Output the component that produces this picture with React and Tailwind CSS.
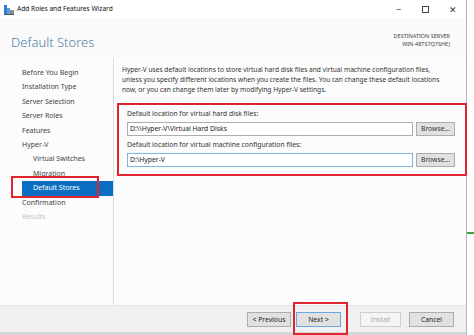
import React from 'react';

const navItems = [
  { label: 'Before You Begin' },
  { label: 'Installation Type' },
  { label: 'Server Selection' },
  { label: 'Server Roles' },
  { label: 'Features' },
  { label: 'Hyper-V' },
  { label: 'Virtual Switches', sub: true },
  { label: 'Migration', sub: true },
  { label: 'Default Stores', sub: true, active: true },
  { label: 'Confirmation' },
  { label: 'Results', disabled: true },
];

const intro = [
  'Hyper-V uses default locations to store virtual hard disk files and virtual machine configuration files,',
  'unless you specify different locations when you create the files. You can change these default locations',
  'now, or you can change them later by modifying Hyper-V settings.',
];

function WizardIcon() {
  return (
    <svg width="10" height="10" viewBox="0 0 10 10">
      <rect x="0" y="0" width="3" height="9" fill="#2f7fd0" />
      <rect x="3" y="3" width="3" height="6" fill="#5aa0e0" />
      <rect x="6" y="5" width="4" height="4" fill="#8a8a8a" />
      <rect x="0" y="9" width="10" height="1" fill="#555" />
    </svg>
  );
}

function PathRow({ label, value, focused }) {
  return (
    <div className="flex flex-col">
      <div className="text-[6.8px] text-[#333] h-[12px] leading-[12px]">{label}</div>
      <div className="flex items-center gap-[3px] mt-[2px]">
        <div className={`flex-1 h-[14px] bg-white border ${focused ? 'border-[#7eb4ea]' : 'border-[#adadad]'} text-[6.8px] text-[#222] leading-[12px] px-[2px]`}>
          {value}
        </div>
        <div className="w-[39px] h-[14px] bg-[#e1e1e1] border border-[#adadad] text-[6.8px] text-[#333] leading-[12px] text-center">
          Browse...
        </div>
      </div>
    </div>
  );
}

function FooterButton({ children, primary, disabled, w }) {
  return (
    <div
      className={`${w} h-[15px] border text-[6.8px] leading-[13px] text-center ${
        primary
          ? 'bg-[#e1e1e1] border-[#6aa8e4] text-[#222]'
          : disabled
          ? 'bg-[#f4f4f4] border-[#cfcfcf] text-[#a8a8a8]'
          : 'bg-[#e1e1e1] border-[#adadad] text-[#222]'
      }`}
    >
      {children}
    </div>
  );
}

export default function App() {
  return (
    <div
      className="w-[474px] h-[335px] bg-white flex overflow-hidden relative"
      style={{ fontFamily: '"Noto Sans", "Open Sans", sans-serif' }}
    >
      <div className="w-[467px] h-full flex flex-col border-r border-[#b5b5b5]">
        {/* title bar */}
        <div className="h-[18px] flex items-center bg-white">
          <div className="ml-[4px] mt-[1px]">
            <WizardIcon />
          </div>
          <div className="ml-[3px] text-[6.6px] text-[#111]">Add Roles and Features Wizard</div>
          <div className="ml-auto flex items-center text-[#333]">
            <div className="w-[27px] text-center text-[9px] leading-none">−</div>
            <div className="w-[27px] flex justify-center">
              <div className="w-[7px] h-[7px] border border-[#444]" />
            </div>
            <div className="w-[27px] text-center text-[9px] leading-none">✕</div>
          </div>
        </div>

        {/* header */}
        <div className="h-[40px] bg-[#fafafa] flex justify-between px-[11px]">
          <div className="text-[13px] font-light text-[#4f7fa6] mt-[18px] leading-none">Default Stores</div>
          <div className="text-right text-[5.5px] text-[#444] mt-[14px] mr-[5px] leading-[8px]">
            <div>DESTINATION SERVER</div>
            <div>WIN-48TS7Q7SHEJ</div>
          </div>
        </div>

        {/* body */}
        <div className="flex-1 flex bg-[#fcfcfc]">
          <div className="w-[114px] pt-[8px] pb-[10px] border-r border-[#dcdcdc] relative">
            <div className="flex flex-col">
              {navItems.map((it) => (
                <div
                  key={it.label}
                  className={`h-[14.4px] leading-[14.4px] text-[7px] ml-[22px] ${it.sub ? 'pl-[11px]' : 'pl-0'} ${
                    it.active
                      ? 'bg-[#0a6fc2] text-white'
                      : it.disabled
                      ? 'text-[#c4c4c4]'
                      : 'text-[#444]'
                  }`}
                >
                  {it.label}
                </div>
              ))}
            </div>
            <div className="absolute left-[11px] top-[118px] w-[88px] h-[22px] border-2 border-[#e0242e]" />
          </div>

          <div className="flex-1 pl-[3px] pt-[7px]">
            <div className="pl-[5px] text-[6.6px] leading-[10px] text-[#333] whitespace-nowrap">
              {intro.map((line) => (
                <div key={line}>{line}</div>
              ))}
            </div>
            <div className="mt-[8px] mr-[-1px] border-2 border-[#e0242e] pl-[8px] pr-[10px] pt-[3px] pb-[7px] flex flex-col gap-[3px]">
              <PathRow label="Default location for virtual hard disk files:" value="D:\\Hyper-V\Virtual Hard Disks" />
              <PathRow label="Default location for virtual machine configuration files:" value="D:\Hyper-V" focused />
            </div>
          </div>
        </div>

        {/* footer */}
        <div className="h-[27px] bg-[#f0f0f0] border-t border-[#e2e2e2] flex items-center justify-end pr-[12px] relative">
          <div className="flex items-center">
            <FooterButton w="w-[44px]">&lt; Previous</FooterButton>
            <div className="w-[5px]" />
            <FooterButton w="w-[45px]" primary>Next &gt;</FooterButton>
            <div className="w-[19px]" />
            <FooterButton w="w-[41px]" disabled>Install</FooterButton>
            <div className="w-[8px]" />
            <FooterButton w="w-[45px]">Cancel</FooterButton>
          </div>
          <div className="absolute left-[293px] top-[-4px] w-[55px] h-[33px] border-2 border-[#e0242e]" />
        </div>
        <div className="h-[3px] bg-[#d8d8d8]" />
      </div>
      <div className="flex-1 relative bg-white">
        <div className="absolute left-0 top-[232px] w-full h-[2px] bg-[#3aa53a]" />
      </div>
    </div>
  );
}
